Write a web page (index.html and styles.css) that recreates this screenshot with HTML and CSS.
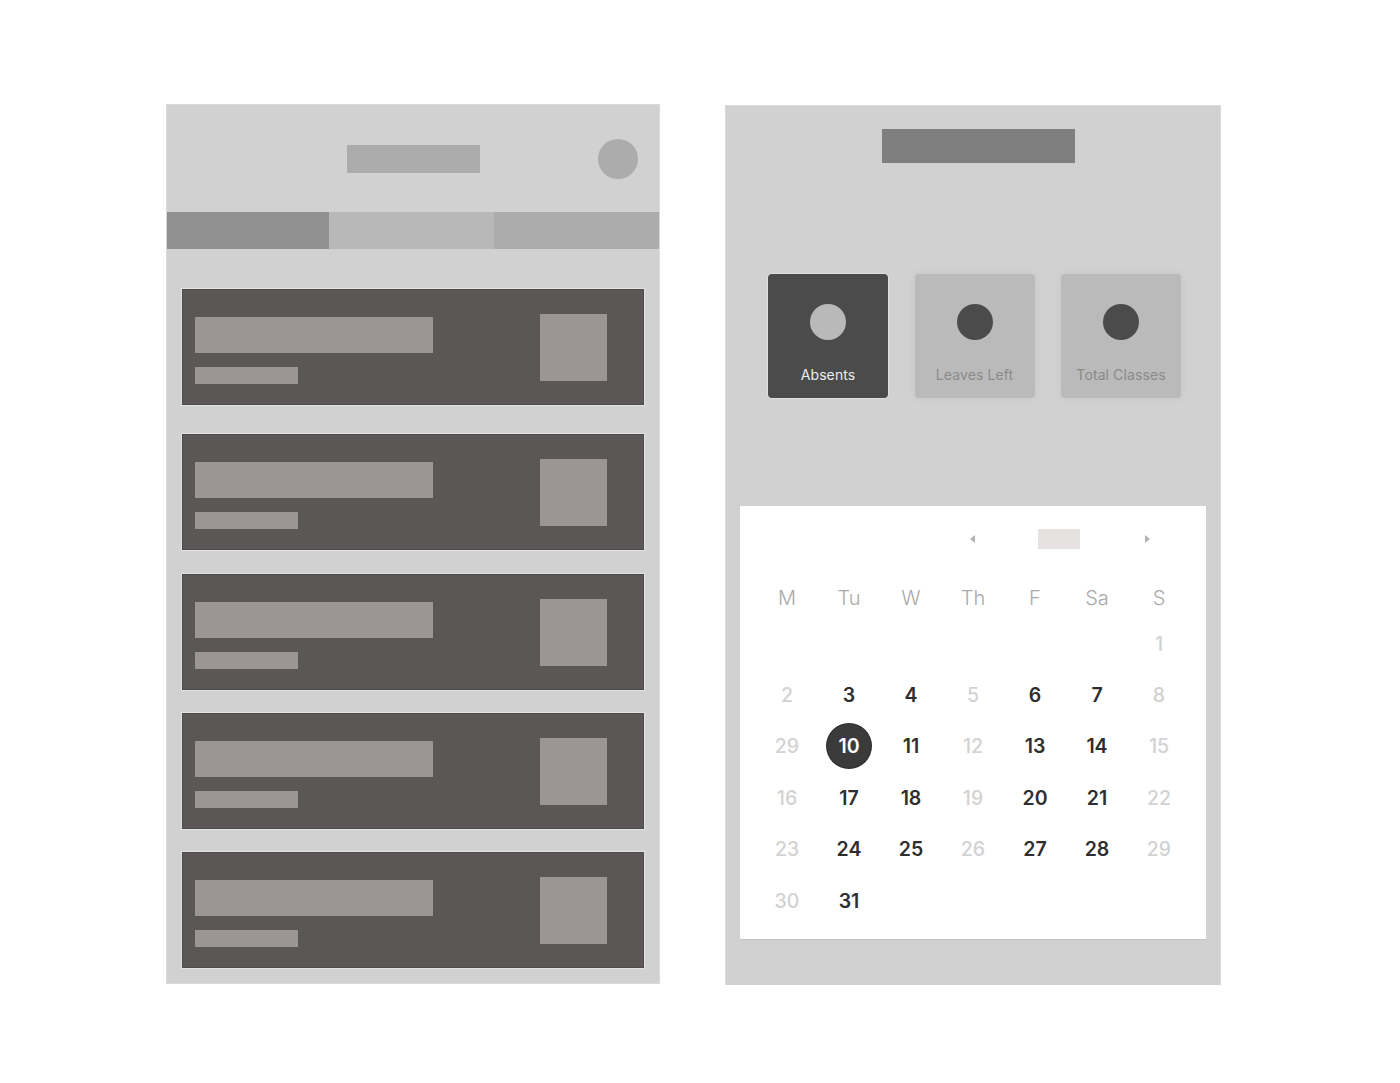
FILE: index.html
```html
<!DOCTYPE html>
<html>
<head>
<meta charset="utf-8">
<link rel="stylesheet" href="styles.css">
</head>
<body>
<div class="stage">
  <section class="phone list-phone">
    <header class="top">
      <div></div>
      <div class="title-bar"></div>
      <div class="avatar"></div>
    </header>
    <nav class="tabs">
      <div class="tab tab-a"></div>
      <div class="tab tab-b"></div>
      <div class="tab tab-c"></div>
    </nav>
    <div class="cards">
      <div class="card"><div class="lines"><div class="l1"></div><div class="l2"></div></div><div class="thumb"></div></div>
      <div class="card"><div class="lines"><div class="l1"></div><div class="l2"></div></div><div class="thumb"></div></div>
      <div class="card"><div class="lines"><div class="l1"></div><div class="l2"></div></div><div class="thumb"></div></div>
      <div class="card"><div class="lines"><div class="l1"></div><div class="l2"></div></div><div class="thumb"></div></div>
      <div class="card"><div class="lines"><div class="l1"></div><div class="l2"></div></div><div class="thumb"></div></div>
    </div>
  </section>

  <section class="phone cal-phone">
    <div class="cal-title"></div>
    <div class="stats">
      <div class="stat stat-active"><span class="dot"></span><span class="label">Absents</span></div>
      <div class="stat"><span class="dot"></span><span class="label">Leaves Left</span></div>
      <div class="stat"><span class="dot"></span><span class="label">Total Classes</span></div>
    </div>
    <div class="calendar">
      <div class="cal-nav">
        <span class="tri tri-left"></span>
        <span class="month"></span>
        <span class="tri tri-right"></span>
      </div>
      <div class="grid">
        <div class="wd">M</div><div class="wd">Tu</div><div class="wd">W</div><div class="wd">Th</div><div class="wd">F</div><div class="wd">Sa</div><div class="wd">S</div>

        <div class="d"></div><div class="d"></div><div class="d"></div><div class="d"></div><div class="d"></div><div class="d"></div><div class="d off">1</div>

        <div class="d off">2</div><div class="d">3</div><div class="d">4</div><div class="d off">5</div><div class="d">6</div><div class="d">7</div><div class="d off">8</div>

        <div class="d off">29</div><div class="d"><span class="sel">10</span></div><div class="d">11</div><div class="d off">12</div><div class="d">13</div><div class="d">14</div><div class="d off">15</div>

        <div class="d off">16</div><div class="d">17</div><div class="d">18</div><div class="d off">19</div><div class="d">20</div><div class="d">21</div><div class="d off">22</div>

        <div class="d off">23</div><div class="d">24</div><div class="d">25</div><div class="d off">26</div><div class="d">27</div><div class="d">28</div><div class="d off">29</div>

        <div class="d off">30</div><div class="d">31</div>
      </div>
    </div>
  </section>
</div>
</body>
</html>
```
FILE: styles.css
```css
* { box-sizing: border-box; }
html, body { margin: 0; padding: 0; background: #ffffff; }
body { font-family: Inter, "Noto Sans", sans-serif; }

.stage {
  display: flex;
  align-items: flex-start;
  gap: 67px;
  padding: 105px 0 0 167px;
}

.phone {
  background: #d1d1d1;
  box-shadow: 0 0 0 1px #dadada;
}

/* ---------- left phone ---------- */
.list-phone {
  width: 492px;
  height: 878px;
  display: flex;
  flex-direction: column;
}
.top {
  height: 107px;
  display: grid;
  grid-template-columns: 1fr 133px 1fr;
  align-items: center;
}
.title-bar {
  width: 133px;
  height: 28px;
  background: #acacac;
}
.avatar {
  justify-self: end;
  margin-right: 21px;
  width: 40px;
  height: 40px;
  border-radius: 50%;
  background: #acacac;
}
.tabs {
  display: flex;
  height: 37px;
}
.tab-a { width: 162px; background: #909090; }
.tab-b { width: 165px; background: #b8b8b8; }
.tab-c { width: 165px; background: #acacac; }

.cards {
  display: flex;
  flex-direction: column;
  gap: 23px;
  padding: 40px 15px 0 15px;
}
.card:first-child { margin-bottom: 6px; }
.card:nth-child(2) { margin-bottom: 1px; }
.card {
  height: 116px;
  background: #5b5756;
  border: 1px solid #4f4b4a;
  box-shadow: 0 0 0 1px #e2e2e2;
  display: flex;
  align-items: center;
  justify-content: space-between;
  padding: 0 36px 0 12px;
}
.lines {
  display: flex;
  flex-direction: column;
  gap: 14px;
  margin-top: 6px;
}
.l1 { width: 238px; height: 36px; background: #9b9695; }
.l2 { width: 103px; height: 17px; background: #9b9695; }
.thumb { width: 67px; height: 67px; background: #9b9695; }

/* ---------- right phone ---------- */
.cal-phone {
  width: 494px;
  height: 879px;
  margin-top: 1px;
  display: flex;
  flex-direction: column;
  padding-top: 23px;
}
.cal-title {
  width: 193px;
  height: 34px;
  background: #7f7f7f;
  margin-left: 156px;
}
.stats {
  display: flex;
  gap: 26.5px;
  margin: 111px 0 0 42px;
}
.stat {
  width: 120px;
  height: 124px;
  border-radius: 4px;
  background: #bababa;
  box-shadow: 0 0 8px rgba(0, 0, 0, 0.06);
  display: flex;
  flex-direction: column;
  align-items: center;
  padding-top: 30px;
}
.stat .dot {
  width: 36px;
  height: 36px;
  border-radius: 50%;
  background: #4b4b4b;
}
.stat .label {
  margin-top: 26px;
  font-size: 14px;
  color: #8a8a8a;
  letter-spacing: 0.1px;
}
.stat-active {
  background: #4b4b4b;
  box-shadow: 0 0 0 1px #e0e0e0;
}
.stat-active .dot { background: #b9b9b9; }
.stat-active .label { color: #ececec; }

.calendar {
  margin: 108px 0 0 14px;
  width: 466px;
  height: 433px;
  background: #ffffff;
  box-shadow: 0 1px 0 #c4c4c4;
  padding: 23px 17px 0 16px;
}
.cal-nav {
  height: 20px;
  display: flex;
  align-items: center;
  padding-left: 214px;
}
.tri {
  width: 0;
  height: 0;
  border-top: 4px solid transparent;
  border-bottom: 4px solid transparent;
}
.tri-left { border-right: 5px solid #b4b4b4; }
.tri-right { border-left: 5px solid #b4b4b4; margin-left: 65px; }
.month {
  width: 42px;
  height: 20px;
  background: #e6e2e2;
  margin-left: 63px;
}

.grid {
  margin-top: 29px;
  display: grid;
  grid-template-columns: repeat(7, 62px);
  grid-auto-rows: 51.4px;
  grid-template-rows: 40px;
}
.wd {
  display: flex;
  align-items: center;
  justify-content: center;
  font-size: 20px;
  font-weight: 300;
  color: #a9a9a9;
}
.d {
  display: flex;
  align-items: center;
  justify-content: center;
  font-size: 19.5px;
  font-weight: 600;
  color: #2e2e2e;
}
.d.off {
  color: #d2d2d2;
  font-weight: 500;
}
.sel {
  width: 44px;
  height: 44px;
  border-radius: 50%;
  background: #3b3b3b;
  color: #ffffff;
  display: flex;
  align-items: center;
  justify-content: center;
  box-shadow: 0 0 0 1px #2c2c2c;
}
```
